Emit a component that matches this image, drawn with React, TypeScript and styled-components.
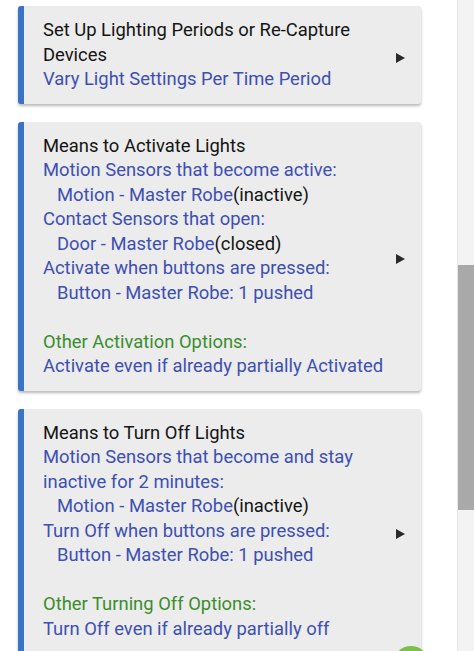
import React from "react";
import styled, { createGlobalStyle } from "styled-components";

const Global = createGlobalStyle`
  html, body { margin: 0; padding: 0; background: #ffffff; }
  body { font-family: Roboto, "Noto Sans", "Liberation Sans", sans-serif; }
  #root { height: 651px; overflow: hidden; }
`;

const Page = styled.div`
  display: flex;
  height: 651px;
  width: 474px;
  overflow: hidden;
`;

const Main = styled.div`
  flex: 1;
  padding: 6px 36px 0 18px;
  display: flex;
  flex-direction: column;
  gap: 18px;
  position: relative;
`;

const Card = styled.div`
  display: flex;
  align-items: center;
  background: #ececec;
  border-left: 6px solid #3a72c4;
  border-radius: 3px;
  box-shadow: 0 2px 3px rgba(0, 0, 0, 0.28);
  padding: 12px 16px 12px 19px;
  flex-shrink: 0;
`;

const Body = styled.div`
  flex: 1;
  font-size: 18.4px;
  line-height: 24.5px;
  color: #141414;
`;

const Title = styled.div`
  color: #141414;
`;

const Line = styled.div<{ $tone?: "blue" | "green"; $indent?: boolean }>`
  color: ${(p) => (p.$tone === "green" ? "#3a8e2c" : p.$tone === "blue" ? "#3d4fb3" : "#141414")};
  padding-left: ${(p) => (p.$indent ? "14px" : "0")};
`;

const State = styled.span`
  color: #141414;
`;

const Spacer = styled.div`
  height: 24.5px;
`;

const Arrow = styled.div`
  width: 0;
  height: 0;
  border-top: 5px solid transparent;
  border-bottom: 5px solid transparent;
  border-left: 9px solid #2a2a2a;
  margin-left: 8px;
  margin-top: 6px;
`;

const Fab = styled.div`
  position: absolute;
  left: 393px;
  top: 646px;
  width: 36px;
  height: 36px;
  border-radius: 50%;
  background: #7cc04a;
`;

const Track = styled.div`
  width: 16px;
  background: #f3f3f3;
  border-left: 1px solid #e6e6e6;
  display: flex;
  flex-direction: column;
`;

const Thumb = styled.div`
  margin-top: 265px;
  height: 245px;
  background: #a9a9a9;
`;

export default function App() {
  return (
    <>
      <Global />
      <Page>
        <Main>
          <Card>
            <Body>
              <Title>Set Up Lighting Periods or Re-Capture Devices</Title>
              <Line $tone="blue">Vary Light Settings Per Time Period</Line>
            </Body>
            <Arrow />
          </Card>
          <Card>
            <Body>
              <Title>Means to Activate Lights</Title>
              <Line $tone="blue">Motion Sensors that become active:</Line>
              <Line $tone="blue" $indent>
                Motion - Master Robe<State>(inactive)</State>
              </Line>
              <Line $tone="blue">Contact Sensors that open:</Line>
              <Line $tone="blue" $indent>
                Door - Master Robe<State>(closed)</State>
              </Line>
              <Line $tone="blue">Activate when buttons are pressed:</Line>
              <Line $tone="blue" $indent>Button - Master Robe: 1 pushed</Line>
              <Spacer />
              <Line $tone="green">Other Activation Options:</Line>
              <Line $tone="blue">Activate even if already partially Activated</Line>
            </Body>
            <Arrow />
          </Card>
          <Card>
            <Body>
              <Title>Means to Turn Off Lights</Title>
              <Line $tone="blue">Motion Sensors that become and stay inactive for 2 minutes:</Line>
              <Line $tone="blue" $indent>
                Motion - Master Robe<State>(inactive)</State>
              </Line>
              <Line $tone="blue">Turn Off when buttons are pressed:</Line>
              <Line $tone="blue" $indent>Button - Master Robe: 1 pushed</Line>
              <Spacer />
              <Line $tone="green">Other Turning Off Options:</Line>
              <Line $tone="blue">Turn Off even if already partially off</Line>
            </Body>
            <Arrow />
          </Card>
          <Fab />
        </Main>
        <Track>
          <Thumb />
        </Track>
      </Page>
    </>
  );
}
